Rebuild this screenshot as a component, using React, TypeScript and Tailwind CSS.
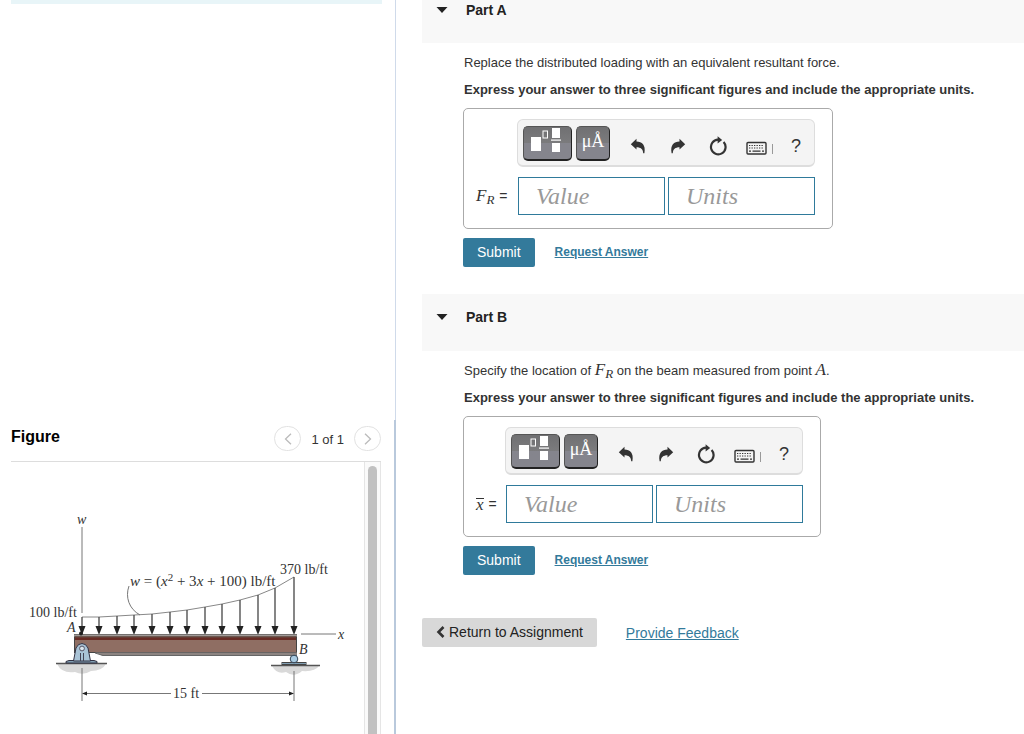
import React from 'react';

const arrows = [
  [82, 617], [99, 617], [117, 616], [134, 615], [152, 614], [170, 612], [187, 610],
  [205, 607], [222, 604], [240, 600], [258, 595], [275, 588], [294, 577],
];

const BeamFigure = () => (
  <svg viewBox="11 462 353 272" className="w-full" role="img" aria-label="Beam with distributed load" fontFamily="'Liberation Serif', serif" fontSize="14" fill="#333">
    {/* Axes */}
    <path d="M82 527V613M301 634H336" stroke="#777" fill="none" />
    <text x="77" y="524" fontStyle="italic">w</text>
    <text x="338" y="639" fontStyle="italic">x</text>

    {/* Load curve and arrows */}
    <polyline points={arrows.map((p) => p.join(',')).join(' ')} stroke="#888" fill="none" />
    {arrows.map(([x, y]) => (
      <g key={x}>
        <path d={`M${x} ${y}V628`} stroke="#444" strokeWidth="1.3" />
        <path d={`M${x - 3.5} 626H${x + 3.5}L${x} 635Z`} fill="#222" />
      </g>
    ))}
    <path d="M129 586C125 597 129 609 140 615" stroke="#777" fill="none" />
    <text x="130" y="586" fontSize="15">
      <tspan fontStyle="italic">w</tspan> = (<tspan fontStyle="italic">x</tspan>
      <tspan dy="-5" fontSize="11">2</tspan>
      <tspan dy="5"> + 3</tspan><tspan fontStyle="italic">x</tspan> + 100) lb/ft
    </text>
    <text x="280" y="574">370 lb/ft</text>
    <text x="29" y="617">100 lb/ft</text>
    <text x="67" y="632" fontStyle="italic">A</text>
    <text x="299" y="654" fontStyle="italic">B</text>

    {/* Beam */}
    <rect x="74.5" y="634.5" width="222" height="18" fill="#8f6e63" stroke="#444" />
    <path d="M74 635.5H297" stroke="#a29b98" strokeWidth="2" />
    <path d="M75 637H296" stroke="#3f2a26" />
    <path d="M75 638.7H296" stroke="#682c25" strokeWidth="2.4" />
    <path d="M95 652.5H297V656H103Z" fill="#8c8481" />
    <path d="M95 653L103 655.5H297" stroke="#666" fill="none" />
    <circle cx="81" cy="633.5" r="2" fill="#222" />

    {/* Pin support */}
    <path d="M57 664Q62 674 75 672Q83 676 91 671Q102 671 106 664Z" fill="#d9d9d9" />
    <path d="M56 663.5H107" stroke="#555" strokeWidth="1.5" />
    <path d="M66 663V661.5L69 660.5H94L97 661.5V663Z" fill="#819eb2" stroke="#334" />
    <path d="M73.5 661L76 648Q78 643.5 82 643.5Q86 643.5 88 648L90.5 661Z" fill="#a9c3d6" stroke="#334" />
    <circle cx="82" cy="648.5" r="2.4" fill="#dce7ee" stroke="#556" />
    <path d="M80.5 653V661M83.5 653V661" stroke="#445" />

    {/* Roller support */}
    <path d="M272 666Q277 675 286 672Q294 678 302 671Q315 672 319 666Z" fill="#d9d9d9" />
    <path d="M271 665.5H320" stroke="#555" strokeWidth="1.5" />
    <rect x="282" y="662.5" width="24" height="2" fill="#819eb2" stroke="#444" />
    <circle cx="294" cy="659" r="3.8" fill="#a9cbe2" stroke="#345" />

    {/* Span dimension */}
    <path d="M82 668V701M294 671V701M84 693.5H171M202 693.5H292" stroke="#777" fill="none" />
    <path d="M82 693.5L87 691.5V695.5ZM294 693.5L289 691.5V695.5Z" fill="#222" />
    <text x="173" y="698">15 ft</text>
  </svg>
);

const UndoIcon = () => (
  <svg viewBox="0 0 16 16" className="size-4" fill="#333">
    <path d="M0.8 6.2L6.5 0.8V3.6C12 3.8 16 7 14.4 15.2H13.2C13 11 10.8 9.3 6.5 9.2V11.6Z" />
  </svg>
);

const RedoIcon = () => (
  <svg viewBox="0 0 16 16" className="size-4" fill="#333">
    <path d="M15.2 6.2L9.5 0.8V3.6C4 3.8 0 7 1.6 15.2H2.8C3 11 5.2 9.3 9.5 9.2V11.6Z" />
  </svg>
);

const ResetIcon = () => (
  <svg viewBox="0 0 18 20" className="h-5 w-[18px]" fill="none" stroke="#333" strokeWidth="2.2">
    <path d="M14.6 6A7.3 7.3 0 1 1 9 3.7" />
    <path d="M8.6 0.2L13.2 3.9L8.6 7.4Z" fill="#333" stroke="none" />
  </svg>
);

const KeyboardIcon = () => (
  <svg viewBox="0 0 28 14" className="h-3.5 w-7" fill="none" stroke="#333">
    <rect x="1" y="1.5" width="19" height="11.5" rx="1" strokeWidth="1.4" />
    <path d="M3 4.5H18M3 7H18" strokeWidth="1.2" strokeDasharray="1.3 1.2" />
    <path d="M3 10.2H5M6.5 10.2H14.5M16 10.2H18" strokeWidth="1.3" />
    <path d="M26.5 3V13" stroke="#999" />
  </svg>
);

const keyClass =
  'h-[35px] rounded-[5px] border border-[#555] border-r-[#222] border-b-2 border-b-[#222] bg-linear-to-b from-[#707072] from-0% via-[#7b7b7d] via-50% to-[#85858d] to-50%';

const Toolbar = () => (
  <div className="flex h-12 rounded-md border border-[#ddd] border-b-2 bg-[#f4f4f4] pt-[6px] pl-[5px]">
    <button type="button" aria-label="Templates" className={`${keyClass} w-[49px]`}>
      <svg viewBox="0 0 47 32" className="h-8 w-full" fill="#fff">
        <rect x="7" y="10" width="10" height="14" />
        <rect x="19" y="4" width="4.5" height="7" fill="none" stroke="#fff" />
        <rect x="28" y="1" width="8" height="10" />
        <rect x="27" y="12.5" width="10" height="1.2" />
        <rect x="28" y="16" width="8" height="9" />
      </svg>
    </button>
    <button type="button" aria-label="Symbols" className={`${keyClass} ml-1 w-[34px] pb-1 font-['Liberation_Serif',serif] text-lg leading-6 text-white`}>
      μÅ
    </button>
    <div className="ml-2 flex h-11 items-center pb-1">
      <button type="button" aria-label="Undo" className="flex w-10 justify-center"><UndoIcon /></button>
      <button type="button" aria-label="Redo" className="flex w-10 justify-center"><RedoIcon /></button>
      <button type="button" aria-label="Reset" className="flex w-10 justify-center"><ResetIcon /></button>
      <button type="button" aria-label="Keyboard" className="flex w-10 justify-end pt-1 pr-1"><KeyboardIcon /></button>
      <button type="button" aria-label="Help" className="w-9 text-lg leading-5">?</button>
    </div>
  </div>
);

const inputClass =
  "h-[38px] w-[147px] border border-[#2f7a9b] bg-white px-[17px] font-['Liberation_Serif',serif] text-2xl italic placeholder:text-[#999] focus:outline-none";

const ForceSymbol = () => (
  <span className="font-['Liberation_Serif',serif] text-[17px] leading-4 italic">
    F<sub className="relative top-[3px] bottom-0 text-[13px] leading-none">R</sub>
  </span>
);

type AnswerBoxProps = {
  id: string;
  labelWidth: string;
  label: React.ReactNode;
};

const AnswerBox = ({ id, labelWidth, label }: AnswerBoxProps) => (
  <form onSubmit={(e) => e.preventDefault()}>
    <div className="flex w-fit items-end rounded-[5px] border border-[#aaa] pt-[10px] pr-[17px] pb-[13px] pl-3">
      <label htmlFor={`${id}-value`} className={`${labelWidth} flex h-[38px] items-center gap-[5px] whitespace-nowrap text-sm`}>
        {label} =
      </label>
      <div>
        <Toolbar />
        <div className="mt-[10px] flex gap-[3px] pl-px">
          <input id={`${id}-value`} placeholder="Value" className={inputClass} />
          <input id={`${id}-units`} aria-label="Units" placeholder="Units" className={inputClass} />
        </div>
      </div>
    </div>
    <div className="mt-[9px] flex items-center gap-5">
      <button type="submit" className="h-[29px] rounded-xs bg-[#337a9b] px-[14px] pb-px text-sm text-white">Submit</button>
      <a href="#request" className="pb-px text-xs font-bold text-[#337a9b] underline">Request Answer</a>
    </div>
  </form>
);

type PartProps = {
  title: string;
  headerClass: string;
  prompt: React.ReactNode;
  children: React.ReactNode;
};

const Part = ({ title, headerClass, prompt, children }: PartProps) => (
  <section className="pb-[27px]">
    <div className={`${headerClass} bg-[#f8f8f8] pl-[14px]`}>
      <button type="button" className="flex items-center gap-[18px] text-sm leading-5 font-bold text-[#222]">
        <svg viewBox="0 0 12 6" className="h-[6px] w-3" fill="#222"><path d="M0.5 0H11.5L6 6Z" /></svg>
        {title}
      </button>
    </div>
    <div className="pt-[6px] pl-[41px]">
      <p className="h-[27px] pl-px text-[13px] leading-[27px]">{prompt}</p>
      <p className="mb-[5px] pl-px text-[13px] leading-[27px] font-bold">
        Express your answer to three significant figures and include the appropriate units.
      </p>
      {children}
    </div>
  </section>
);

export default function App() {
  return (
    <div className="flex h-screen overflow-hidden bg-white font-['Liberation_Sans',Arial,sans-serif] text-[#333]">
      {/* Left column */}
      <aside className="flex w-[396px] shrink-0 flex-col">
        <div className="h-[420px] shrink-0 border-r border-[#cfdaea] pr-[13px] pl-[11px]">
          <div className="h-1 bg-[#e8f5f8]" />
        </div>
        <div className="flex min-h-0 flex-1 flex-col border-r-2 border-[#b9c9dc] pr-[13px] pl-[11px]">
          <div className="flex h-[42px] shrink-0 items-center justify-between border-b border-[#ddd]">
            <h2 className="pb-2 text-base font-bold text-black">Figure</h2>
            <div className="flex items-center gap-[10px] pb-1 text-[13px]">
              <button type="button" aria-label="Previous figure" className="flex h-[25px] w-[27px] items-center justify-center rounded-full border border-[#e2e2e2]">
                <svg viewBox="0 0 8 12" className="h-3 w-2" fill="none" stroke="#bbb" strokeWidth="1.3"><path d="M7 0.7L1.5 6L7 11.3" /></svg>
              </button>
              <span className="pt-[2px]">1 of 1</span>
              <button type="button" aria-label="Next figure" className="flex h-[25px] w-[27px] items-center justify-center rounded-full border border-[#e2e2e2]">
                <svg viewBox="0 0 8 12" className="h-3 w-2" fill="none" stroke="#bbb" strokeWidth="1.3"><path d="M1 0.7L6.5 6L1 11.3" /></svg>
              </button>
            </div>
          </div>
          <div className="flex min-h-0 flex-1">
            <div className="min-w-0 flex-1 overflow-hidden"><BeamFigure /></div>
            <div className="flex w-[17px] flex-col border-x border-[#e5e5e5] bg-[#fafafa] px-[3px] pt-1">
              <div className="flex-1 rounded-t-full bg-[#c1c1c1]" />
            </div>
          </div>
        </div>
      </aside>

      {/* Questions */}
      <main className="min-w-0 flex-1 pl-[26px]">
        <Part title="Part A" headerClass="h-[43px]" prompt="Replace the distributed loading with an equivalent resultant force.">
          <AnswerBox id="force" labelWidth="w-[41px]" label={<ForceSymbol />} />
        </Part>
        <Part
          title="Part B"
          headerClass="h-[57px] pt-[13px]"
          prompt={<>Specify the location of <ForceSymbol /> on the beam measured from point <span className="font-['Liberation_Serif',serif] text-[17px] leading-4 italic">A</span>.</>}
        >
          <AnswerBox
            id="location"
            labelWidth="w-[29px]"
            label={<span className="border-t border-[#333] font-['Liberation_Serif',serif] text-[17px] leading-3 italic">x</span>}
          />
        </Part>
        <div className="mt-4 flex items-center gap-[29px]">
          <button type="button" className="flex h-[29px] items-center gap-1 rounded-xs bg-[#d8d8d8] px-[14px] pb-[2px] text-sm text-[#222]">
            <svg viewBox="0 0 9 12" className="h-3 w-[9px]" fill="none" stroke="#333" strokeWidth="2.6"><path d="M7.5 1L2.5 6L7.5 11" /></svg>
            Return to Assignment
          </button>
          <a href="#feedback" className="text-sm text-[#337a9b] underline">Provide Feedback</a>
        </div>
      </main>
    </div>
  );
}
